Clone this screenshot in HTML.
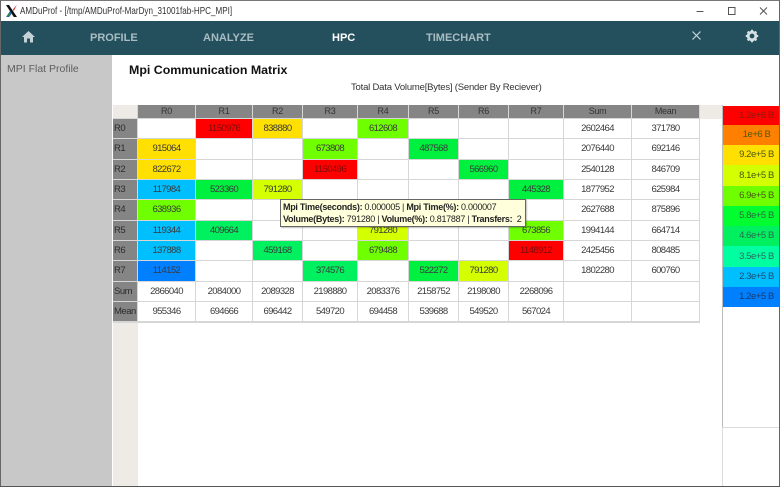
<!DOCTYPE html>
<html><head><meta charset="utf-8">
<style>
*{box-sizing:border-box}
html,body{margin:0;padding:0;width:780px;height:487px;overflow:hidden;background:#fff;font-family:"Liberation Sans",sans-serif;color:#333}
#wrap{position:absolute;left:0;top:0;width:780px;height:487px;filter:blur(.3px);background:#fff}
.a{position:absolute}
#grid{position:absolute;left:113px;top:105px;display:grid;gap:1px;background:#d6d6d6;width:587px;height:218px;padding-bottom:1px;padding-right:1px;
grid-template-columns:24px 57px 56px 49px 54px 50px 49px 49px 54px 67px 67px;
grid-template-rows:13px 19px 20px 19px 19px 20px 19px 19px 20px 19px 19px}
#grid div{background:#fff;font-size:9.5px;letter-spacing:-.6px;line-height:19px;text-align:center;white-space:nowrap;overflow:hidden;color:#3a3a3a}
#grid div.h{background:#858585;color:#333;line-height:13px;font-size:9px;letter-spacing:-.3px}
#grid div.s{background:#858585;color:#2c2c2c;text-align:left;padding-left:1px;font-size:9.5px;letter-spacing:-.5px}
#grid div.c{background:#eeebe6}
#grid div.r{background:#f00;color:#7a0c0c}
#grid div.y{background:#ffe000}
#grid div.g{background:#d4ff00}
#grid div.l{background:#6fff00}
#grid div.m{background:#00f040}
#grid div.t{background:#00f060}
#grid div.b{background:#00bfff}
#grid div.d{background:#0080ff}
.lg{position:absolute;left:723px;width:57px;font-size:9.5px;letter-spacing:-.45px;padding-left:10px;text-align:center;color:#4a5a10}
.nav{position:absolute;top:30px;font-size:11px;font-weight:bold;color:#a9bcc2;line-height:16px;white-space:nowrap}
</style></head><body><div id="wrap">
<!-- title bar -->
<div class="a" style="left:0;top:0;width:780px;height:1px;background:#777"></div>
<svg class="a" style="left:5px;top:4px" width="13" height="14" viewBox="0 0 13 14">
<path d="M1 1L4 1L12 13L8.800 13Z" fill="#111"/>
<path d="M1 13L5 7L6.800 9.500L4.200 13Z" fill="#2c62c0"/>
<path d="M1.500 13L4.800 8L5.600 9.200L3 13Z" fill="#2a8a3a"/>
<path d="M7.800 5.500L11.800 1L8.800 7Z" fill="#d33"/>
</svg>
<div class="a" style="left:20px;top:3px;font-size:10.5px;line-height:16px;color:#333;white-space:nowrap;transform:scaleX(.77);transform-origin:left center">AMDuProf - [/tmp/AMDuProf-MarDyn_31001fab-HPC_MPI]</div>
<svg class="a" style="left:690px;top:4px" width="90" height="14" viewBox="0 0 90 14">
<path d="M6.500 7.500H13.500" stroke="#555" stroke-width="1" fill="none"/>
<rect x="38.500" y="3.500" width="6.500" height="7" stroke="#555" fill="none"/>
<path d="M70 3.500L77 10.500M77 3.500L70 10.500" stroke="#555" stroke-width="1" fill="none"/>
</svg>
<!-- nav -->
<div class="a" style="left:0;top:21px;width:780px;height:34px;background:#24505e"></div>
<svg class="a" style="left:21px;top:30px" width="15" height="13" viewBox="0 0 15 13">
<path d="M7.500 1L1 7H3V12.500H6V8.500H9V12.500H12V7H14Z" fill="#c4d3d8"/>
</svg>
<div class="nav" style="left:90px">PROFILE</div>
<div class="nav" style="left:203px">ANALYZE</div>
<div class="nav" style="left:332px;color:#fff">HPC</div>
<div class="nav" style="left:426px">TIMECHART</div>
<svg class="a" style="left:690px;top:29px" width="13" height="13" viewBox="0 0 13 13">
<path d="M2.500 2.500L10.500 10.500M10.500 2.500L2.500 10.500" stroke="#c9d7db" stroke-width="1.200" fill="none"/>
</svg>
<svg class="a" style="left:745px;top:29px" width="14" height="14" viewBox="0 0 14 14">
<circle cx="7" cy="7" r="3.800" fill="none" stroke="#d5e0e3" stroke-width="2.800"/>
<path d="M7 .8V3M7 11V13.200M.8 7H3M11 7H13.200M2.600 2.600L4.200 4.200M9.800 9.800L11.400 11.400M2.600 11.400L4.200 9.800M9.800 4.200L11.400 2.600" stroke="#d5e0e3" stroke-width="2.200"/>
</svg>
<!-- sidebar -->
<div class="a" style="left:1px;top:55px;width:111px;height:431px;background:#c8c8c8"></div>
<div class="a" style="left:7px;top:62px;font-size:10.5px;line-height:15px;color:#5e5e5e;white-space:nowrap">MPI Flat Profile</div>
<!-- heading -->
<div class="a" style="left:129px;top:62px;font-size:12.4px;line-height:17px;font-weight:bold;color:#111;white-space:nowrap">Mpi Communication Matrix</div>
<div class="a" style="left:351px;top:80px;font-size:9.5px;letter-spacing:-.2px;line-height:15px;color:#333;white-space:nowrap">Total Data Volume[Bytes] (Sender By Reciever)</div>
<!-- left strip -->
<div class="a" style="left:113px;top:323px;width:25px;height:163px;background:#eeebe6"></div>
<div class="a" style="left:700px;top:105px;width:22px;height:14px;background:#eeebe6"></div>
<!-- grid -->
<div id="grid">
<div class="c"></div><div class="h">R0</div><div class="h">R1</div><div class="h">R2</div><div class="h">R3</div><div class="h">R4</div><div class="h">R5</div><div class="h">R6</div><div class="h">R7</div><div class="h">Sum</div><div class="h">Mean</div>
<div class="s">R0</div><div></div><div class="r">1150976</div><div class="y">838880</div><div></div><div class="l">612608</div><div></div><div></div><div></div><div>2602464</div><div>371780</div>
<div class="s">R1</div><div class="y">915064</div><div></div><div></div><div class="l">673808</div><div></div><div class="m">487568</div><div></div><div></div><div>2076440</div><div>692146</div>
<div class="s">R2</div><div class="y">822672</div><div></div><div></div><div class="r">1150496</div><div></div><div></div><div class="m">566960</div><div></div><div>2540128</div><div>846709</div>
<div class="s">R3</div><div class="b">117984</div><div class="m">523360</div><div class="g">791280</div><div></div><div></div><div></div><div></div><div class="m">445328</div><div>1877952</div><div>625984</div>
<div class="s">R4</div><div class="l">638936</div><div></div><div></div><div></div><div></div><div></div><div></div><div></div><div>2627688</div><div>875896</div>
<div class="s">R5</div><div class="b">119344</div><div class="t">409664</div><div></div><div></div><div class="g">791280</div><div></div><div></div><div class="l">673856</div><div>1994144</div><div>664714</div>
<div class="s">R6</div><div class="b">137888</div><div></div><div class="t">459168</div><div></div><div class="l">679488</div><div></div><div></div><div class="r">1148912</div><div>2425456</div><div>808485</div>
<div class="s">R7</div><div class="d">114152</div><div></div><div></div><div class="t">374576</div><div></div><div class="m">522272</div><div class="g">791280</div><div></div><div>1802280</div><div>600760</div>
<div class="s">Sum</div><div>2866040</div><div>2084000</div><div>2089328</div><div>2198880</div><div>2083376</div><div>2158752</div><div>2198080</div><div>2268096</div><div></div><div></div>
<div class="s">Mean</div><div>955346</div><div>694666</div><div>696442</div><div>549720</div><div>694458</div><div>539688</div><div>549520</div><div>567024</div><div></div><div></div>
</div>
<!-- tooltip -->
<div class="a" style="left:280px;top:199px;width:246px;height:28px;background:#ffffdc;border:1px solid #666;font-size:9px;letter-spacing:-.28px;line-height:12px;padding:1px 2px;color:#222;white-space:nowrap;box-shadow:1px 1px 1px rgba(0,0,0,.25)"><b>Mpi Time(seconds):</b> 0.000005 | <b>Mpi Time(%):</b> 0.000007<br><b>Volume(Bytes):</b> 791280 | <b>Volume(%):</b> 0.817887 | <b>Transfers:</b>&nbsp; 2</div>
<!-- legend -->
<div class="a" style="left:722px;top:105px;width:1px;height:322px;background:#bcbcbc"></div>
<div class="a" style="left:722px;top:427px;width:1px;height:59px;background:#dcdcdc"></div>
<div class="a" style="left:722px;top:427px;width:58px;height:1px;background:#dcdcdc"></div>
<div class="lg" style="top:106px;height:19px;line-height:19px;background:#f00;color:#8a1a10">1.2e+6 B</div>
<div class="lg" style="top:125px;height:20px;line-height:20px;background:#ff8000">1e+6 B</div>
<div class="lg" style="top:145px;height:20px;line-height:20px;background:#ffe000">9.2e+5 B</div>
<div class="lg" style="top:165px;height:21px;line-height:21px;background:#d4ff00">8.1e+5 B</div>
<div class="lg" style="top:186px;height:20px;line-height:20px;background:#6fff00">6.9e+5 B</div>
<div class="lg" style="top:206px;height:20px;line-height:20px;background:#00ff30;color:#2a6a40">5.8e+5 B</div>
<div class="lg" style="top:226px;height:20px;line-height:20px;background:#00f060;color:#2a6a50">4.6e+5 B</div>
<div class="lg" style="top:246px;height:21px;line-height:21px;background:#00ffa0;color:#2a6a60">3.5e+5 B</div>
<div class="lg" style="top:267px;height:20px;line-height:20px;background:#00bfff;color:#1a4a70">2.3e+5 B</div>
<div class="lg" style="top:287px;height:20px;line-height:20px;background:#0080ff;color:#1a3a70">1.2e+5 B</div>
<!-- window border -->
<div class="a" style="left:0;top:0;width:1px;height:487px;background:#666"></div>
<div class="a" style="left:779px;top:0;width:1px;height:487px;background:#666"></div>
<div class="a" style="left:0;top:486px;width:780px;height:1px;background:#555"></div>
</div></body></html>
